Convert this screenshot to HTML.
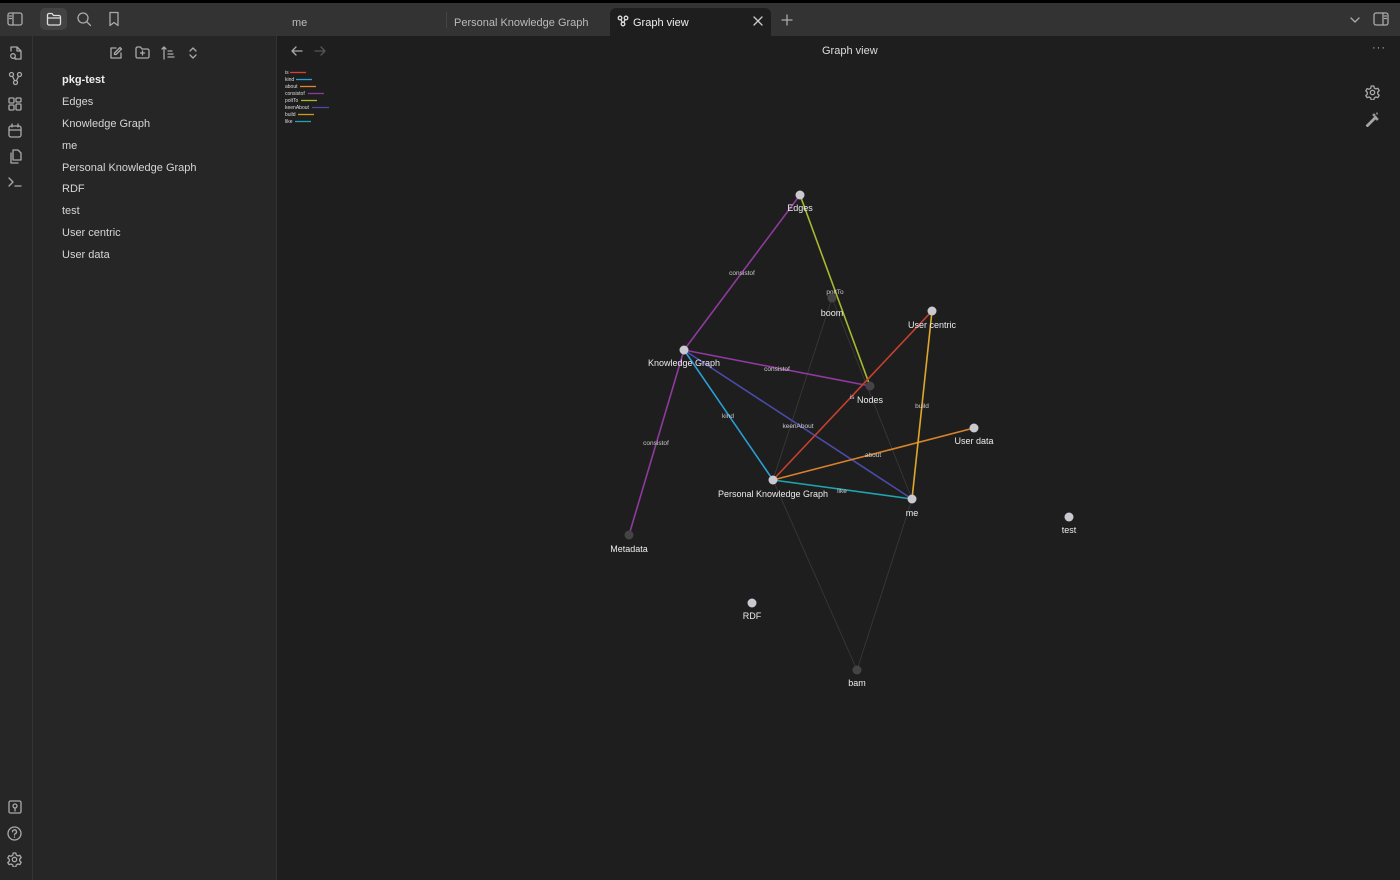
<!DOCTYPE html>
<html><head><meta charset="utf-8"><style>
*{margin:0;padding:0;box-sizing:border-box}
body{width:1400px;height:880px;background:#1e1e1e;font-family:"Liberation Sans",sans-serif;overflow:hidden;position:relative;color:#dadada}
.top{position:absolute;left:0;top:0;width:1400px;height:36px;background:#333;border-top:3px solid #000}
.ribbon{position:absolute;left:0;top:36px;width:33px;height:844px;background:#262626;border-right:1px solid #333}
.side{position:absolute;left:33px;top:36px;width:244px;height:844px;background:#262626;border-right:1px solid #333}
.side .it{position:absolute;left:29px;font-size:11px;color:#d6d6d6}
svg.ic{position:absolute;fill:none;stroke:#aaa;stroke-width:1.3;stroke-linecap:round;stroke-linejoin:round}
.tab{position:absolute;top:14px;font-size:11px;color:#bbb}
</style></head><body>
<div class="top">
 <div style="position:absolute;left:40px;top:5px;width:27px;height:22px;background:#434343;border-radius:5px"></div>
 <svg class="ic" style="left:7px;top:9px" width="16" height="14" viewBox="0 0 16 14"><rect x="1" y="1" width="14" height="12" rx="2"/><path d="M6 1v12M2.5 4h2M2.5 6.5h2"/></svg>
 <svg class="ic" style="left:46px;top:9px;stroke:#ddd" width="16" height="14" viewBox="0 0 16 14"><path d="M1.5 3a1.5 1.5 0 0 1 1.5-1.5h3l1.5 2h5.5A1.5 1.5 0 0 1 14.5 5v6.5A1.5 1.5 0 0 1 13 13H3a1.5 1.5 0 0 1-1.5-1.5zM1.5 6h13"/></svg>
 <svg class="ic" style="left:76px;top:8px" width="16" height="16" viewBox="0 0 16 16"><circle cx="7" cy="7" r="5"/><path d="M11 11l3.5 3.5"/></svg>
 <svg class="ic" style="left:107px;top:8px" width="14" height="16" viewBox="0 0 14 16"><path d="M3 1.5h8v13l-4-3-4 3z"/></svg>
 <div class="tab" style="left:292px;top:14px">me</div>
 <div style="position:absolute;left:446px;top:9px;width:1px;height:16px;background:#444"></div>
 <div class="tab" style="left:454px;top:14px">Personal Knowledge Graph</div>
 <div style="position:absolute;left:610px;top:5px;width:161px;height:31px;background:#1e1e1e;border-radius:6px 6px 0 0"></div>
 <svg class="ic" style="left:617px;top:12px;stroke:#ddd" width="12" height="12" viewBox="0 0 12 12"><circle cx="3" cy="3" r="1.8"/><circle cx="9" cy="3" r="1.8"/><circle cx="6" cy="9" r="1.8"/><path d="M4 4.5l1.2 3M8 4.5l-1.2 3"/></svg>
 <div class="tab" style="left:633px;top:14px;color:#eee">Graph view</div>
 <svg class="ic" style="left:753px;top:13px;stroke:#ccc" width="10" height="10" viewBox="0 0 10 10"><path d="M1 1l8 8M9 1l-8 8"/></svg>
 <svg class="ic" style="left:781px;top:11px" width="12" height="12" viewBox="0 0 12 12"><path d="M6 1v10M1 6h10"/></svg>
 <svg class="ic" style="left:1349px;top:13px" width="12" height="8" viewBox="0 0 12 8"><path d="M2 2l4 4 4-4"/></svg>
 <svg class="ic" style="left:1373px;top:9px" width="16" height="14" viewBox="0 0 16 14"><rect x="1" y="1" width="14" height="12" rx="2"/><path d="M10 1v12M11.5 4h2M11.5 6.5h2"/></svg>
</div>
<div class="ribbon">
 <svg class="ic" style="left:8px;top:9px" width="15" height="16" viewBox="0 0 15 16"><path d="M3 6V2h6l4 4v8H7M9 2v4h4"/><circle cx="5" cy="11" r="2.3"/><path d="M6.7 12.7l1.5 1.5"/></svg>
 <svg class="ic" style="left:8px;top:35px" width="15" height="15" viewBox="0 0 15 15"><circle cx="3.5" cy="3.5" r="2"/><circle cx="11.5" cy="3.5" r="2"/><circle cx="7.5" cy="11.5" r="2"/><path d="M4.5 5.3l2 4.2M10.5 5.3l-2 4.2"/></svg>
 <svg class="ic" style="left:8px;top:61px" width="14" height="14" viewBox="0 0 14 14"><rect x="1" y="1" width="5" height="5" rx="1"/><rect x="8" y="1" width="5" height="4" rx="1"/><rect x="1" y="8" width="5" height="5" rx="1"/><rect x="8" y="7" width="5" height="6" rx="1"/></svg>
 <svg class="ic" style="left:8px;top:87px" width="14" height="15" viewBox="0 0 14 15"><rect x="1" y="3" width="12" height="11" rx="2"/><path d="M1 7h12M4 1v3M10 1v3"/></svg>
 <svg class="ic" style="left:8px;top:113px" width="14" height="15" viewBox="0 0 14 15"><path d="M5 1h5l3 3v7H5zM3 4v10h7"/></svg>
 <svg class="ic" style="left:8px;top:140px" width="14" height="12" viewBox="0 0 14 12"><path d="M1 2l4 4-4 4M7 10h6"/></svg>
 <svg class="ic" style="left:8px;top:764px" width="14" height="14" viewBox="0 0 14 14"><rect x="1" y="1" width="12" height="12" rx="1.5"/><circle cx="7" cy="6" r="2"/><path d="M7 8v3"/></svg>
 <svg class="ic" style="left:7px;top:790px" width="15" height="15" viewBox="0 0 15 15"><circle cx="7.5" cy="7.5" r="6.5"/><path d="M5.5 5.8a2 2 0 1 1 2.7 1.9c-.6.3-.7.7-.7 1.3M7.5 11v.2"/></svg>
 <svg class="ic" style="left:7px;top:816px" width="15" height="15" viewBox="0 0 15 15"><circle cx="7.5" cy="7.5" r="2.2"/><path d="M6.2 1h2.6l.5 2 1.6.9 2-.6 1.3 2.3-1.5 1.4v1.9l1.5 1.4-1.3 2.3-2-.6-1.6.9-.5 2H6.2l-.5-2-1.6-.9-2 .6L.8 10.6l1.5-1.4V7.3L.8 5.9 2.1 3.6l2 .6 1.6-.9z"/></svg>
</div>
<div class="side">
 <svg class="ic" style="left:76px;top:10px" width="14" height="14" viewBox="0 0 14 14"><path d="M7 2H2v10h10V7"/><path d="M11 1.5l1.5 1.5L7 8.5H5.5V7z"/></svg>
 <svg class="ic" style="left:102px;top:10px" width="15" height="13" viewBox="0 0 15 13"><path d="M1 2.5a1.5 1.5 0 0 1 1.5-1.5h3l1.5 2h5.5a1.5 1.5 0 0 1 1.5 1.5v6a1.5 1.5 0 0 1-1.5 1.5h-10A1.5 1.5 0 0 1 1 10.5zM7.5 5v4M5.5 7h4"/></svg>
 <svg class="ic" style="left:128px;top:10px" width="14" height="14" viewBox="0 0 14 14"><path d="M3 13V1M1 3l2-2 2 2M7 5h4M7 8h5M7 11h6"/></svg>
 <svg class="ic" style="left:155px;top:10px" width="10" height="14" viewBox="0 0 10 14"><path d="M2 5l3-3 3 3M2 9l3 3 3-3"/></svg>
 <div class="it" style="top:38px;font-weight:bold;color:#eee">pkg-test</div>
 <div class="it" style="top:60px">Edges</div>
 <div class="it" style="top:82px">Knowledge Graph</div>
 <div class="it" style="top:104px">me</div>
 <div class="it" style="top:126px">Personal Knowledge Graph</div>
 <div class="it" style="top:147px">RDF</div>
 <div class="it" style="top:169px">test</div>
 <div class="it" style="top:191px">User centric</div>
 <div class="it" style="top:213px">User data</div>
</div>
<svg class="ic" style="left:291px;top:45px" width="12" height="12" viewBox="0 0 12 12"><path d="M11 6H1M5 2L1 6l4 4"/></svg>
<svg class="ic" style="left:314px;top:45px;stroke:#555" width="12" height="12" viewBox="0 0 12 12"><path d="M1 6h10M7 2l4 4-4 4"/></svg>
<div style="position:absolute;left:822px;top:45px;font-size:11px;color:#ddd">Graph view</div>
<div style="position:absolute;left:1372px;top:42px;font-size:11px;color:#bbb;letter-spacing:1px">···</div>
<svg class="ic" style="left:1365px;top:85px" width="15" height="15" viewBox="0 0 15 15"><circle cx="7.5" cy="7.5" r="2.2"/><path d="M6.2 1h2.6l.5 2 1.6.9 2-.6 1.3 2.3-1.5 1.4v1.9l1.5 1.4-1.3 2.3-2-.6-1.6.9-.5 2H6.2l-.5-2-1.6-.9-2 .6L.8 10.6l1.5-1.4V7.3L.8 5.9 2.1 3.6l2 .6 1.6-.9z"/></svg>
<svg class="ic" style="left:1365px;top:112px" width="15" height="15" viewBox="0 0 15 15"><path d="M1.5 13.5l9-9 1 1-9 9zM9 2v2M8 3h2M12 6v2M11 7h2M12 1v1"/></svg>
<svg style="position:absolute;left:0;top:0" width="1400" height="880" font-family="Liberation Sans, sans-serif">
 <g font-size="5" fill="#ddd">
  <text x="285" y="74">is</text><line x1="290" y1="72.5" x2="306" y2="72.5" stroke="#d24533" stroke-width="1.3"/>
  <text x="285" y="81">kind</text><line x1="296" y1="79.5" x2="312" y2="79.5" stroke="#2a9fd6" stroke-width="1.3"/>
  <text x="285" y="88">about</text><line x1="300" y1="86.5" x2="316" y2="86.5" stroke="#e0882a" stroke-width="1.3"/>
  <text x="285" y="95">consistof</text><line x1="308" y1="93.5" x2="324" y2="93.5" stroke="#8e3a9e" stroke-width="1.3"/>
  <text x="285" y="102">poltTo</text><line x1="301" y1="100.5" x2="317" y2="100.5" stroke="#a8b82f" stroke-width="1.3"/>
  <text x="285" y="109">keenAbout</text><line x1="312" y1="107.5" x2="329" y2="107.5" stroke="#4a4aa8" stroke-width="1.3"/>
  <text x="285" y="116">build</text><line x1="298" y1="114.5" x2="314" y2="114.5" stroke="#c9992a" stroke-width="1.3"/>
  <text x="285" y="123">like</text><line x1="295" y1="121.5" x2="311" y2="121.5" stroke="#1fa5b0" stroke-width="1.3"/>
 </g>
 <g stroke="#3a3a3a" stroke-width="0.8">
  <line x1="832" y1="298" x2="773" y2="480"/><line x1="832" y1="298" x2="912" y2="499"/>
  <line x1="773" y1="480" x2="857" y2="670"/><line x1="912" y1="499" x2="857" y2="670"/>
 </g>
 <g stroke-width="1.6">
  <line x1="800" y1="195" x2="684" y2="350" stroke="#8e3a9e"/>
  <line x1="800" y1="195" x2="870" y2="386" stroke="#a8b82f"/>
  <line x1="684" y1="350" x2="870" y2="386" stroke="#8e3a9e"/>
  <line x1="684" y1="350" x2="629" y2="535" stroke="#8e3a9e"/>
  <line x1="684" y1="350" x2="773" y2="480" stroke="#2a9fd6"/>
  <line x1="684" y1="350" x2="912" y2="499" stroke="#4a4aa8"/>
  <line x1="773" y1="480" x2="932" y2="311" stroke="#c8402f"/>
  <line x1="773" y1="480" x2="974" y2="428" stroke="#d9822b"/>
  <line x1="773" y1="480" x2="912" y2="499" stroke="#1fa5b0"/>
  <line x1="912" y1="499" x2="932" y2="311" stroke="#e0a82a"/>
 </g>
 <g font-size="6.5" fill="#ccc" text-anchor="middle">
  <text x="742" y="275">consistof</text><text x="835" y="294">poltTo</text>
  <text x="777" y="371">consistof</text><text x="852" y="399">is</text>
  <text x="922" y="408">build</text><text x="728" y="418">kind</text>
  <text x="798" y="428">keenAbout</text><text x="656" y="445">consistof</text>
  <text x="873" y="457">about</text><text x="842" y="493">like</text>
 </g>
 <g>
  <circle cx="800" cy="195" r="4.5" fill="#c9c9cf"/><circle cx="684" cy="350" r="4.5" fill="#c9c9cf"/>
  <circle cx="832" cy="298" r="4.5" fill="#444"/><circle cx="932" cy="311" r="4.5" fill="#c9c9cf"/>
  <circle cx="870" cy="386" r="4.5" fill="#444"/><circle cx="974" cy="428" r="4.5" fill="#c9c9cf"/>
  <circle cx="773" cy="480" r="4.5" fill="#c9c9cf"/><circle cx="912" cy="499" r="4.5" fill="#c9c9cf"/>
  <circle cx="1069" cy="517" r="4.5" fill="#c9c9cf"/><circle cx="629" cy="535" r="4.5" fill="#444"/>
  <circle cx="752" cy="603" r="4.5" fill="#c9c9cf"/><circle cx="857" cy="670" r="4.5" fill="#444"/>
 </g>
 <g font-size="9" fill="#ececec" text-anchor="middle">
  <text x="800" y="211">Edges</text><text x="684" y="366">Knowledge Graph</text>
  <text x="832" y="316">boom</text><text x="932" y="328">User centric</text>
  <text x="870" y="403">Nodes</text><text x="974" y="444">User data</text>
  <text x="773" y="497">Personal Knowledge Graph</text><text x="912" y="516">me</text>
  <text x="1069" y="533">test</text><text x="629" y="552">Metadata</text>
  <text x="752" y="619">RDF</text><text x="857" y="686">bam</text>
 </g>
</svg>
</body></html>
